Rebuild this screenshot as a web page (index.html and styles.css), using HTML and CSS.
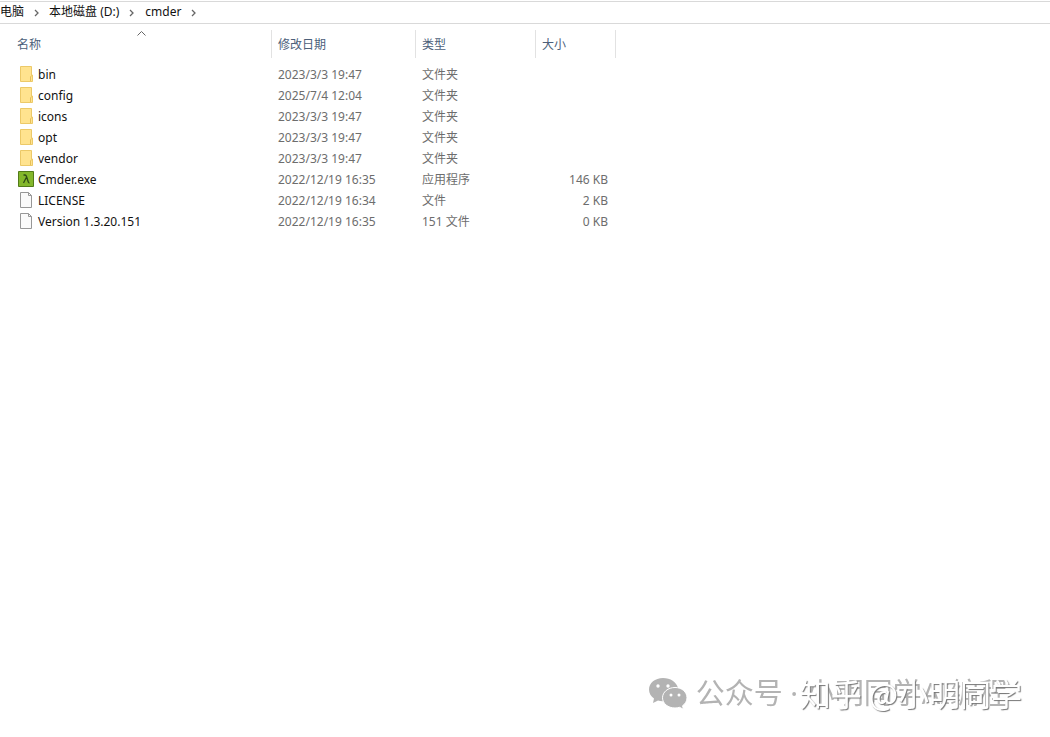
FILE: index.html
```html
<!DOCTYPE html>
<html lang="zh-CN">
<head>
    <meta charset="UTF-8">
    <meta name="viewport" content="width=device-width, initial-scale=1.0">
    <title>cmder</title>
    <link rel="stylesheet" href="styles.css">
</head>
<body>

<!-- icon shapes shared by the rows -->
<svg class="sprite" width="0" height="0">
    <symbol id="chevron" viewBox="0 0 8 8">
        <path d="M2 1L5 4L2 7" fill="none" stroke="#666" stroke-width="1.3"/>
    </symbol>
    <symbol id="folder" viewBox="0 0 16 16">
        <path d="M2.500 .5h11v8.500h1v6.500h-12z" fill="#ffe38f" stroke="#ecc968"/>
        <path d="M12.500 15v-4l1-1.500" fill="none" stroke="#e6bf58"/>
    </symbol>
    <symbol id="file" viewBox="0 0 16 16">
        <path d="M2.500 .5h8l3 3v12h-11z" fill="#fafafa" stroke="#979797"/>
        <path d="M10.500 .5v3h3" fill="none" stroke="#979797"/>
    </symbol>
    <symbol id="lambda" viewBox="0 0 16 16">
        <path d="M.5 .5h15v15h-15z" fill="#83b72b" stroke="#527b19"/>
        <path d="M5.500 4h1.500q1 0 1.400 1.200l2 6q.2.8 1.100.6M8.300 6.500L5.500 12" fill="none" stroke="#2f4a17" stroke-width="1.300"/>
    </symbol>
</svg>

<nav class="breadcrumb">
    <a href="#">电脑</a>
    <svg class="chevron"><use href="#chevron"/></svg>
    <a href="#">本地磁盘 (D:)</a>
    <svg class="chevron"><use href="#chevron"/></svg>
    <a href="#" class="latin">cmder</a>
    <svg class="chevron"><use href="#chevron"/></svg>
</nav>

<main>
    <table class="files">
        <colgroup>
            <col class="col-name">
            <col class="col-date">
            <col class="col-type">
            <col class="col-size">
        </colgroup>
        <thead>
            <tr>
                <th>名称
                    <svg class="sort" viewBox="0 0 9 5"><path d="M.5 4.500l4-4 4 4" fill="none" stroke="#666"/></svg>
                </th>
                <th>修改日期</th>
                <th>类型</th>
                <th>大小</th>
            </tr>
        </thead>
        <tbody>
            <tr>
                <td><a href="#"><svg class="icon"><use href="#folder"/></svg>bin</a></td>
                <td>2023/3/3 19:47</td>
                <td>文件夹</td>
                <td></td>
            </tr>
            <tr>
                <td><a href="#"><svg class="icon"><use href="#folder"/></svg>config</a></td>
                <td>2025/7/4 12:04</td>
                <td>文件夹</td>
                <td></td>
            </tr>
            <tr>
                <td><a href="#"><svg class="icon"><use href="#folder"/></svg>icons</a></td>
                <td>2023/3/3 19:47</td>
                <td>文件夹</td>
                <td></td>
            </tr>
            <tr>
                <td><a href="#"><svg class="icon"><use href="#folder"/></svg>opt</a></td>
                <td>2023/3/3 19:47</td>
                <td>文件夹</td>
                <td></td>
            </tr>
            <tr>
                <td><a href="#"><svg class="icon"><use href="#folder"/></svg>vendor</a></td>
                <td>2023/3/3 19:47</td>
                <td>文件夹</td>
                <td></td>
            </tr>
            <tr>
                <td><a href="#"><svg class="icon"><use href="#lambda"/></svg>Cmder.exe</a></td>
                <td>2022/12/19 16:35</td>
                <td>应用程序</td>
                <td>146 KB</td>
            </tr>
            <tr>
                <td><a href="#"><svg class="icon"><use href="#file"/></svg>LICENSE</a></td>
                <td>2022/12/19 16:34</td>
                <td>文件</td>
                <td>2 KB</td>
            </tr>
            <tr>
                <td><a href="#"><svg class="icon"><use href="#file"/></svg>Version 1.3.20.151</a></td>
                <td>2022/12/19 16:35</td>
                <td>151 文件</td>
                <td>0 KB</td>
            </tr>
        </tbody>
    </table>
</main>

<div class="watermark wechat">
    <svg class="wechat-logo" viewBox="0 0 40 34">
        <path d="M15 2C7 2 1 7 1 13.500c0 4 2 7 5 9L5 27l5-2.500q3 1 7 .5a11 11 0 0 1 13-13C28.500 6 22.500 2 15 2z" fill="#b3b3b3"/>
        <path d="M27 11.500c-7 0-12.500 4.600-12.500 10.300s5.500 10.200 12.500 10.200q2.500 0 4.500-.7l4 2-1-3.500c2.700-1.800 4.500-4.600 4.500-8 0-5.700-5-10.300-12-10.300z" fill="#b3b3b3" stroke="#fff"/>
        <g fill="#fff">
            <circle cx="10" cy="10" r="1.700"/>
            <circle cx="20" cy="10" r="1.700"/>
            <circle cx="23" cy="19" r="1.500"/>
            <circle cx="31" cy="19" r="1.500"/>
        </g>
    </svg>
    <span>公众号 · 小明同学AI编程</span>
</div>
<div class="watermark zhihu">知乎 @小明同学</div>

</body>
</html>
```
FILE: styles.css
```css
body {
    margin: 0;
    background-color: #fff;
    color: #111;
    font-family: "Noto Sans", "Noto Sans CJK SC", sans-serif;
    font-size: 12px;
}
a {
    color: inherit;
    text-decoration: none;
}
.sprite {
    position: absolute;
}
.breadcrumb {
    display: flex;
    align-items: center;
    gap: 8px;
    height: 21px;
    margin-top: 1px;
    border-top: 1px solid #d9d9d9;
    border-bottom: 1px solid #d9d9d9;
    line-height: 18px;
}
.breadcrumb a {
    padding-right: 1px;
    padding-bottom: 1px;
}
.breadcrumb .latin {
    padding-left: 1px;
}
.chevron {
    width: 8px;
    height: 8px;
}
.files {
    width: 616px;
    margin-top: 6px;
    table-layout: fixed;
    border-collapse: separate;
    border-spacing: 0;
}
.col-name {
    width: 272px;
}
.col-date {
    width: 144px;
}
.col-type {
    width: 120px;
}
.col-size {
    width: 80px;
}
th {
    position: relative;
    height: 28px;
    padding: 0 6px;
    border-right: 1px solid #e2e2e2;
    color: #4c607a;
    font-weight: normal;
    text-align: left;
}
th:first-child {
    padding-left: 17px;
}
.sort {
    position: absolute;
    top: 1px;
    left: 137px;
    width: 9px;
    height: 5px;
}
tbody::before {
    content: "";
    display: block;
    height: 6px;
}
td {
    height: 21px;
    padding: 0 6px;
    color: #6d6d6d;
    line-height: 20px;
    white-space: nowrap;
}
td:first-child {
    padding-left: 18px;
    color: #111;
}
td:last-child {
    padding-right: 8px;
    text-align: right;
}
td a {
    display: flex;
    align-items: center;
    gap: 4px;
}
.icon {
    width: 16px;
    height: 16px;
    margin-bottom: 1px;
}
.watermark {
    position: fixed;
    bottom: 24px;
    line-height: 40px;
    white-space: nowrap;
}
.wechat {
    display: flex;
    align-items: center;
    gap: 8px;
    right: 42px;
    color: #b3b3b3;
    font-size: 29px;
}
.wechat-logo {
    width: 40px;
    height: 34px;
}
.zhihu {
    right: 28px;
    color: #fff;
    font-family: "Noto Sans CJK SC", sans-serif;
    font-size: 31px;
    text-shadow: 1px 1px 1px #777;
}
```
